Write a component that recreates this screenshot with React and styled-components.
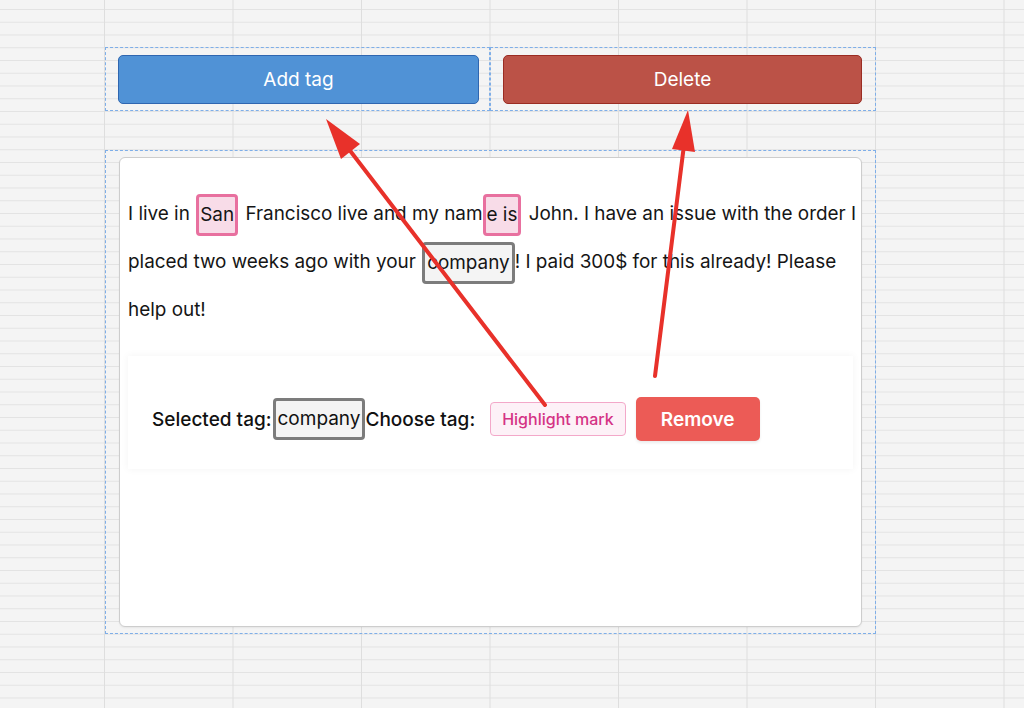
import React from "react";
import styled, { createGlobalStyle } from "styled-components";

const Global = createGlobalStyle`
  html, body {
    margin: 0;
    padding: 0;
  }
  body {
    font-family: Inter, "Noto Sans", "Liberation Sans", sans-serif;
    background-color: #f4f4f4;
    background-image:
      linear-gradient(to right, #dedede 1px, transparent 1px),
      linear-gradient(to bottom, #e3e3e3 1px, transparent 1px);
    background-size: 128.5px 100%, 100% 12.75px;
    background-position: 104px 0, 0 9px;
    min-height: 708px;
    color: #151515;
  }
`;

const Page = styled.div`
  position: relative;
  width: 1024px;
  height: 708px;
  padding: 47px 0 0 105px;
  box-sizing: border-box;
`;

const Layout = styled.div`
  display: grid;
  grid-template-columns: 385px 386px;
  grid-template-rows: 64px 484px;
  row-gap: 39px;
  width: 771px;
`;

const Cell = styled.div`
  box-sizing: border-box;
  border: 1px dashed #7eaee8;
  padding: ${(p) => p.$pad};
  display: flex;
  grid-column: ${(p) => p.$span || "auto"};
`;

const ActionButton = styled.button`
  flex: 1;
  border-radius: 5px;
  border: 1px solid ${(p) => p.$edge};
  background: ${(p) => p.$bg};
  color: #fff;
  font-family: inherit;
  font-size: 19px;
  font-weight: 400;
  cursor: pointer;
`;

const Card = styled.div`
  flex: 1;
  box-sizing: border-box;
  background: #fff;
  border: 1px solid #cdcdcd;
  border-radius: 6px;
  padding: 8px 8px;
  box-shadow: 0 1px 2px rgba(0, 0, 0, 0.06);
`;

const Paragraph = styled.p`
  margin: 24px -6px 0 0;
  font-size: 18.9px;
  line-height: 48px;
  color: #151515;
`;

const Tag = styled.span`
  display: inline-block;
  line-height: 30px;
  padding: 3px ${(p) => p.$padX || "1px"};
  margin: 0 ${(p) => p.$mr || "1px"} 0 ${(p) => p.$ml || "1px"};
  border: 3px solid ${(p) => (p.$kind === "gray" ? "#7c7c7c" : "#e8709f")};
  background: ${(p) => (p.$kind === "gray" ? "#f4f4f4" : "#f8dce8")};
  border-radius: 4px;
  vertical-align: middle;
`;

const Panel = styled.div`
  margin: 22px 0 0;
  padding: 41px 24px 28px;
  background: #fff;
  box-shadow: 0 0 8px rgba(0, 0, 0, 0.05);
  display: flex;
  align-items: center;
`;

const Label = styled.span`
  font-size: 19px;
  font-weight: 500;
  color: #111;
`;

const SelectedTag = styled.span`
  display: inline-block;
  font-size: 19px;
  line-height: 30px;
  padding: 3px 1px;
  margin: 0 1px 0 2px;
  border: 3px solid #7c7c7c;
  background: #f4f4f4;
  border-radius: 4px;
  color: #111;
`;

const HighlightButton = styled.button`
  height: 34px;
  margin-left: 15px;
  padding: 0 11px;
  border: 1px solid #f3a8c9;
  background: #fdf1f7;
  color: #d43385;
  font-family: inherit;
  font-size: 16px;
  font-weight: 500;
  border-radius: 4px;
`;

const RemoveButton = styled.button`
  width: 124px;
  height: 44px;
  margin-left: 10px;
  border: none;
  background: #ec5b56;
  color: #fff;
  font-family: inherit;
  font-size: 19px;
  font-weight: 600;
  border-radius: 5px;
  box-shadow: 0 2px 3px rgba(0, 0, 0, 0.08);
`;

const Overlay = styled.svg`
  position: absolute;
  left: 0;
  top: 0;
  pointer-events: none;
`;

export default function App() {
  return (
    <>
      <Global />
      <Page>
        <Layout>
          <Cell $pad="7px 10px 6px 12px">
            <ActionButton $bg="#5092d6" $edge="#2f66b0">
              Add tag
            </ActionButton>
          </Cell>
          <Cell $pad="7px 13px 6px 12px">
            <ActionButton $bg="#bb5247" $edge="#9a2c23">
              Delete
            </ActionButton>
          </Cell>
          <Cell $span="1 / span 2" $pad="6px 13px 6px 13px">
            <Card>
              <Paragraph>
                I live in <Tag $mr="2px">San</Tag> Francisco live and my nam
                <Tag $ml="0px" $mr="2px">e is</Tag> John. I have an issue with the order I placed
                two weeks ago with your <Tag $kind="gray" $padX="2px" $mr="0px">company</Tag>! I
                paid 300$ for this already! Please help out!
              </Paragraph>
              <Panel>
                <Label>Selected tag:</Label>
                <SelectedTag>company</SelectedTag>
                <Label>Choose tag:</Label>
                <HighlightButton>Highlight mark</HighlightButton>
                <RemoveButton>Remove</RemoveButton>
              </Panel>
            </Card>
          </Cell>
        </Layout>
        <Overlay width="1024" height="708" viewBox="0 0 1024 708">
          <line x1="545" y1="405" x2="348" y2="148" stroke="#e8312a" strokeWidth="4" strokeLinecap="round" />
          <polygon points="326,119 360,144 341,159" fill="#e8312a" />
          <line x1="655" y1="376" x2="684" y2="145" stroke="#e8312a" strokeWidth="4" strokeLinecap="round" />
          <polygon points="688,110 695,152 672,149" fill="#e8312a" />
        </Overlay>
      </Page>
    </>
  );
}
